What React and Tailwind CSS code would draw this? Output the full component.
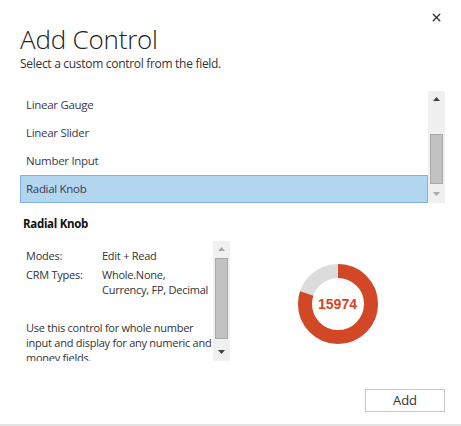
import { X } from "lucide-react";

const controls = ["Linear Gauge", "Linear Slider", "Number Input", "Radial Knob"];

function Arrow({ up, color }) {
  return (
    <svg width="7" height="4" viewBox="0 0 7 4">
      <polygon points={up ? "0,4 7,4 3.5,0" : "0,0 7,0 3.5,4"} fill={color} />
    </svg>
  );
}

function Scrollbar({ thumbTop, thumbHeight, upColor, downColor }) {
  return (
    <div className="w-[17px] bg-[#f0f0f0] relative shrink-0">
      <div className="absolute top-[6px] left-[5px] flex">
        <Arrow up color={upColor} />
      </div>
      <div
        className="absolute left-[2px] w-[13px] bg-[#c2c2c2] border border-[#a9a9a9]"
        style={{ top: thumbTop, height: thumbHeight }}
      />
      <div className="absolute bottom-[7px] left-[5px] flex">
        <Arrow color={downColor} />
      </div>
    </div>
  );
}

function Donut({ value, ratio }) {
  const r = 33;
  const c = 2 * Math.PI * r;
  return (
    <div className="relative w-[80px] h-[80px]">
      <svg width="80" height="80" viewBox="0 0 80 80">
        <circle cx="40" cy="40" r={r} fill="none" stroke="#dcdcdc" strokeWidth="14" />
        <circle
          cx="40"
          cy="40"
          r={r}
          fill="none"
          stroke="#d24726"
          strokeWidth="14"
          strokeDasharray={`${ratio * c} ${c}`}
          transform="rotate(-90 40 40)"
        />
      </svg>
      <div className="absolute inset-0 flex items-center justify-center font-['Liberation_Sans',Arial,sans-serif] font-bold text-[14px] text-[#d24726]">
        {value}
      </div>
    </div>
  );
}

export default function App() {
  const selected = "Radial Knob";

  return (
    <div className="w-[461px] h-[426px] bg-white border-b-2 border-[#e3e3e3] text-[#333] font-['Open_Sans',sans-serif]">
      {/* Header */}
      <div className="flex justify-end pt-[11px] pr-[18px]">
        <button className="text-[#333]">
          <X size={13} strokeWidth={2.5} />
        </button>
      </div>
      <h1 className="ml-[20px] mt-[-1px] text-[26px] font-light leading-[32px] tracking-[-0.2px] text-[#222]">
        Add Control
      </h1>
      <p className="ml-[20px] text-[12px] leading-[18px] tracking-[-0.3px] text-[#333]">
        Select a custom control from the field.
      </p>

      {/* Control list */}
      <div className="ml-[20px] mr-[16px] mt-[18px] h-[112px] flex">
        <div className="flex-1 flex flex-col text-[11.5px] tracking-[-0.3px] text-[#3a3a4a]">
          {controls.map((name) => (
            <div
              key={name}
              className={
                name === selected
                  ? "h-[28px] flex items-center pl-[5px] bg-[#b2d6f0] border border-[#7fb0ea]"
                  : "h-[28px] flex items-center pl-[6px]"
              }
            >
              {name}
            </div>
          ))}
        </div>
        <Scrollbar thumbTop={43} thumbHeight={50} upColor="#404040" downColor="#a8a8a8" />
      </div>

      {/* Details */}
      <div className="ml-[23px] mt-[13px] text-[11.5px] font-bold tracking-[-0.3px] text-[#111] leading-[16px]">
        {selected}
      </div>
      <div className="mt-[9px] ml-[23px] mr-[16px] flex">
        <div className="w-[207px] h-[120px] flex">
          <div className="flex-1 overflow-hidden pl-[3px] pt-[7px] text-[11px] tracking-[-0.25px] text-[#333] leading-[15px]">
            <div className="flex">
              <span className="w-[76px] shrink-0">Modes:</span>
              <span>Edit + Read</span>
            </div>
            <div className="flex mt-[4px]">
              <span className="w-[76px] shrink-0">CRM Types:</span>
              <span>
                Whole.None,
                <br />
                Currency, FP, Decimal
              </span>
            </div>
            <p className="mt-[23px]">
              Use this control for whole number input and display for any numeric and money fields.
            </p>
          </div>
          <Scrollbar thumbTop={17} thumbHeight={81} upColor="#a8a8a8" downColor="#404040" />
        </div>
        <div className="flex-1 flex justify-center pt-[23px]">
          <Donut value="15974" ratio={0.8} />
        </div>
      </div>

      {/* Footer */}
      <div className="flex justify-end mr-[16px] mt-[28px]">
        <button className="w-[80px] h-[23px] border border-[#c6c6c6] bg-white text-[13px] text-[#333] leading-none">
          Add
        </button>
      </div>
    </div>
  );
}
